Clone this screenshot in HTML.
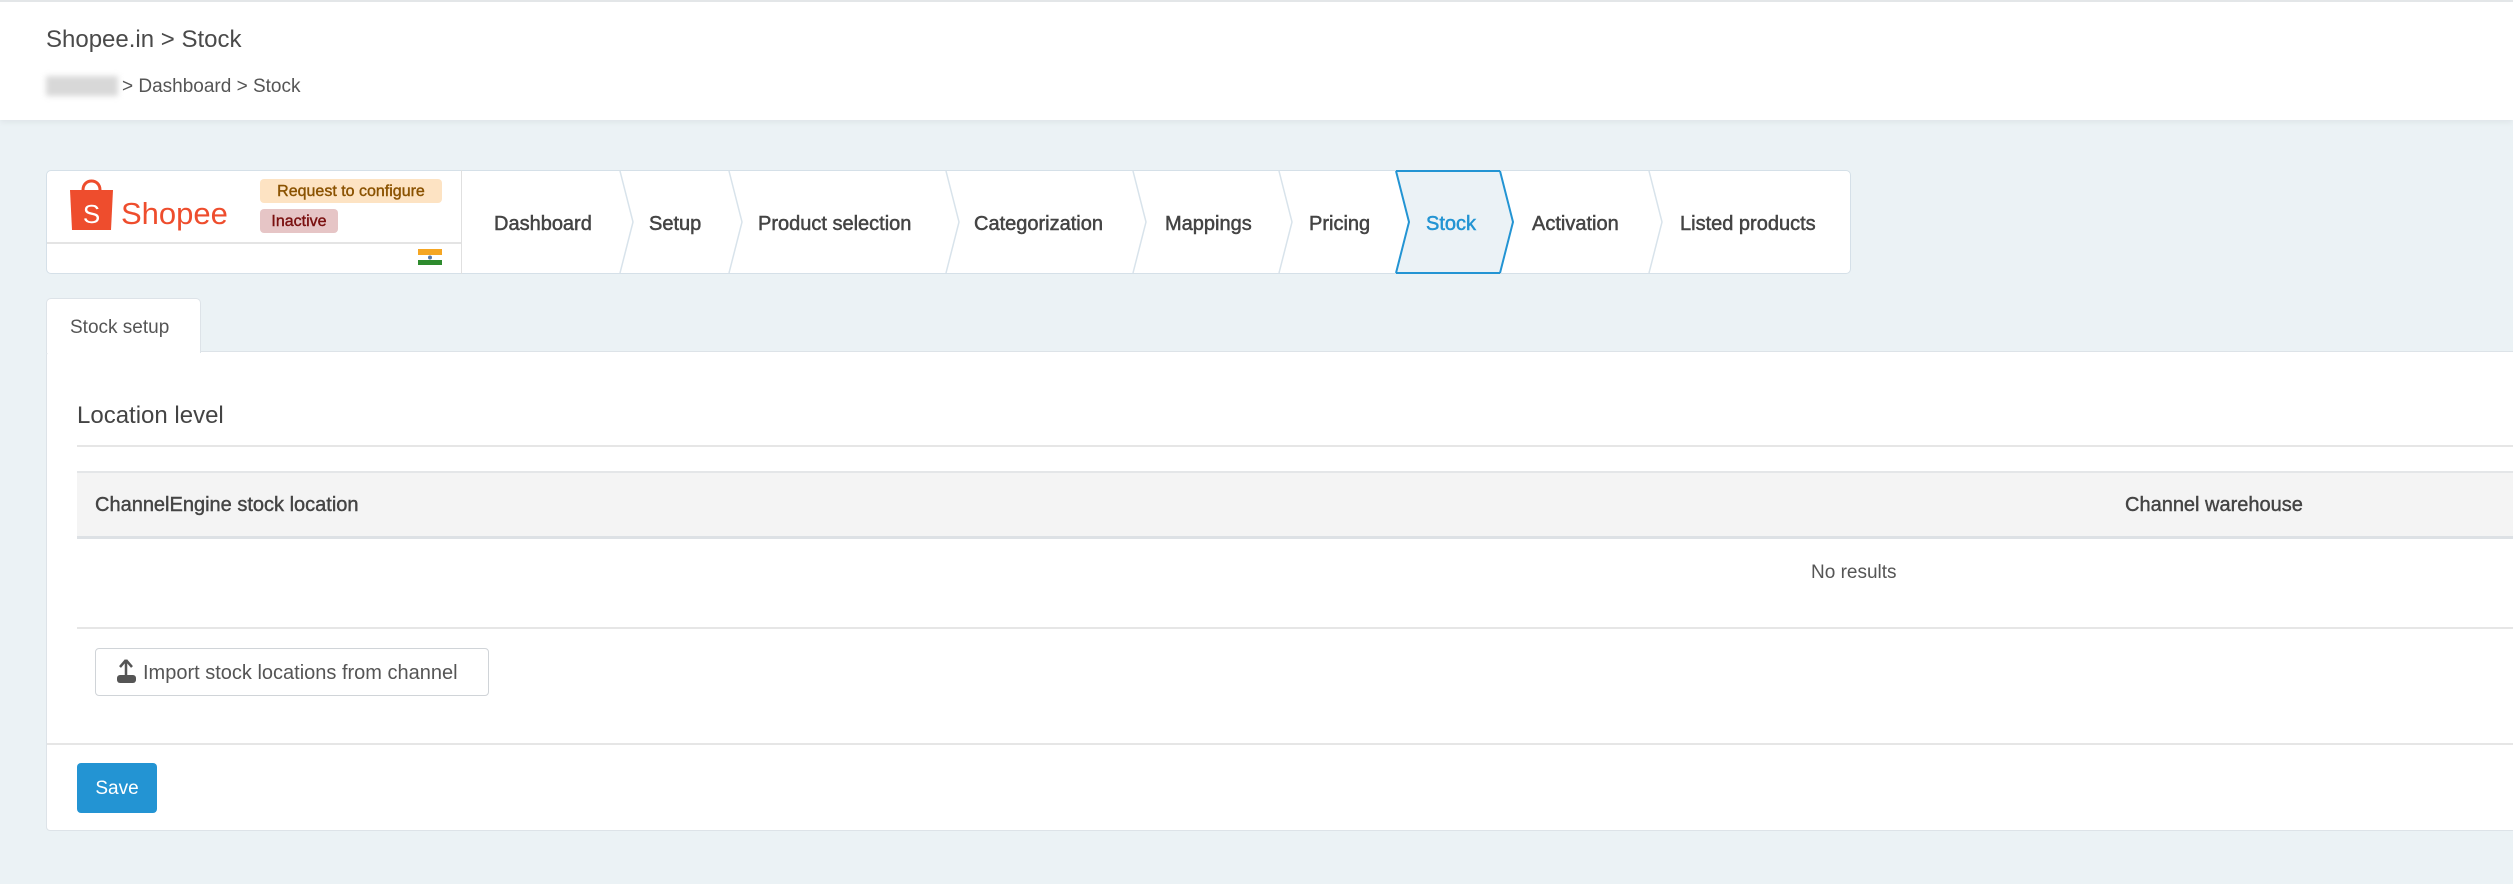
<!DOCTYPE html>
<html><head><meta charset="utf-8"><style>
*{margin:0;padding:0;box-sizing:border-box}
body{width:2513px;height:884px;background:#ebf2f5;font-family:"Liberation Sans",sans-serif;color:#444;position:relative;overflow:hidden}
.a{position:absolute;white-space:nowrap}
.s{top:213px;font-size:20px;color:#444;-webkit-text-stroke:0.5px #444}
</style></head><body>
<div class="a" style="left:0;top:0;width:2513px;height:120px;background:#fff;border-top:2px solid #e3e6e8;box-shadow:0 2px 6px rgba(0,0,0,0.06)"></div>
<div class="a" style="left:46px;top:26px;font-size:24px;color:#4a4a4a">Shopee.in &gt; Stock</div>
<div class="a" style="left:46px;top:76px;width:72px;height:20px;background:#d8d8d8;filter:blur(3px)"></div>
<div class="a" style="left:122px;top:76px;font-size:19px;color:#555">&gt; Dashboard &gt; Stock</div>

<div class="a" style="left:46px;top:170px;width:1805px;height:104px;background:#fff;border:1px solid #d5e0e8;border-radius:5px"></div>
<div class="a" style="left:461px;top:170px;width:1px;height:104px;background:#e0e0e0"></div>
<div class="a" style="left:47px;top:242px;width:414px;height:2px;background:#e4e4e4"></div>
<svg class="a" style="left:0;top:0" width="2513" height="300">
<polygon points="1396,171 1500,171 1513,222 1500,273 1396,273 1409,222" fill="#ebf2f6"/>
<g fill="none" stroke="#d8e3eb" stroke-width="1.5">
<polyline points="620,171 633,222 620,273"/>
<polyline points="729,171 742,222 729,273"/>
<polyline points="946,171 959,222 946,273"/>
<polyline points="1133,171 1146,222 1133,273"/>
<polyline points="1279,171 1292,222 1279,273"/>
<polyline points="1649,171 1662,222 1649,273"/>
</g>
<g fill="none" stroke="#2394d3" stroke-width="2">
<polyline points="1396,171 1409,222 1396,273"/>
<polyline points="1500,171 1513,222 1500,273"/>
<line x1="1396" y1="171" x2="1500" y2="171"/>
<line x1="1396" y1="273" x2="1500" y2="273"/>
</g>
<path d="M70,190 L113,190 L111,230 L72,230 Z" fill="#ee4d2d"/>
<path d="M83,190 C83,178 100,178 100,190" fill="none" stroke="#ee4d2d" stroke-width="3"/>
<text x="91.5" y="223" font-family="Liberation Sans" font-size="26" fill="#fff" text-anchor="middle">S</text>
<text x="121" y="224" font-family="Liberation Sans" font-size="31" fill="#ee4d2d">Shopee</text>
<rect x="418" y="249" width="24" height="6" fill="#f5a623"/>
<rect x="418" y="255" width="24" height="5" fill="#fff"/>
<rect x="418" y="260" width="24" height="5" fill="#2e8b2e"/>
<circle cx="430" cy="257.5" r="2" fill="#5577aa"/>
</svg>
<div class="a" style="left:260px;top:179px;width:182px;height:24px;background:#fde3c3;border-radius:4px;color:#8a5200;font-size:16px;line-height:25px;text-align:center;-webkit-text-stroke:0.4px #8a5200">Request to configure</div>
<div class="a" style="left:260px;top:209px;width:78px;height:24px;background:#e6c5c6;border-radius:4px;color:#7a1010;font-size:16px;line-height:25px;text-align:center;-webkit-text-stroke:0.4px #7a1010">Inactive</div>

<div class="a s" style="left:494px">Dashboard</div>
<div class="a s" style="left:649px">Setup</div>
<div class="a s" style="left:758px">Product selection</div>
<div class="a s" style="left:974px">Categorization</div>
<div class="a s" style="left:1165px">Mappings</div>
<div class="a s" style="left:1309px">Pricing</div>
<div class="a s" style="left:1426px;color:#2394d3;-webkit-text-stroke:0.5px #2394d3">Stock</div>
<div class="a s" style="left:1532px">Activation</div>
<div class="a s" style="left:1680px">Listed products</div>

<div class="a" style="left:46px;top:351px;width:2480px;height:480px;background:#fff;border:1px solid #dde3e8;border-radius:4px"></div>
<div class="a" style="left:46px;top:298px;width:155px;height:55px;background:#fff;border:1px solid #dde3e8;border-bottom:none;border-radius:5px 5px 0 0"></div>
<div class="a" style="left:70px;top:317px;font-size:19px;color:#555">Stock setup</div>

<div class="a" style="left:77px;top:402px;font-size:24px;color:#444">Location level</div>
<div class="a" style="left:77px;top:445px;width:2436px;height:2px;background:#e6e6e6"></div>
<div class="a" style="left:77px;top:471px;width:2436px;height:68px;background:#f4f4f4;border-top:2px solid #e4e6e8;border-bottom:3px solid #dde1e5"></div>
<div class="a" style="left:95px;top:494px;font-size:20px;color:#444;-webkit-text-stroke:0.4px #444">ChannelEngine stock location</div>
<div class="a" style="left:2125px;top:494px;font-size:20px;color:#444;-webkit-text-stroke:0.4px #444">Channel warehouse</div>
<div class="a" style="left:1811px;top:562px;font-size:19px;color:#555">No results</div>
<div class="a" style="left:77px;top:627px;width:2436px;height:2px;background:#e6e6e6"></div>
<div class="a" style="left:95px;top:648px;width:394px;height:48px;border:1px solid #d0d4d8;border-radius:4px;background:#fff"></div>
<svg class="a" style="left:114px;top:658px" width="24" height="28"><path d="M12,2 L6,9 M12,2 L18,9 M12,2 L12,18" stroke="#555" stroke-width="2.5" fill="none"/><rect x="3" y="17" width="19" height="8" rx="3" fill="#555"/></svg>
<div class="a" style="left:143px;top:662px;font-size:20px;color:#555">Import stock locations from channel</div>
<div class="a" style="left:47px;top:743px;width:2466px;height:2px;background:#e6e6e6"></div>
<div class="a" style="left:77px;top:763px;width:80px;height:50px;background:#2394d3;border-radius:4px;color:#fff;font-size:19px;line-height:52px;text-align:center">Save</div>
</body></html>
